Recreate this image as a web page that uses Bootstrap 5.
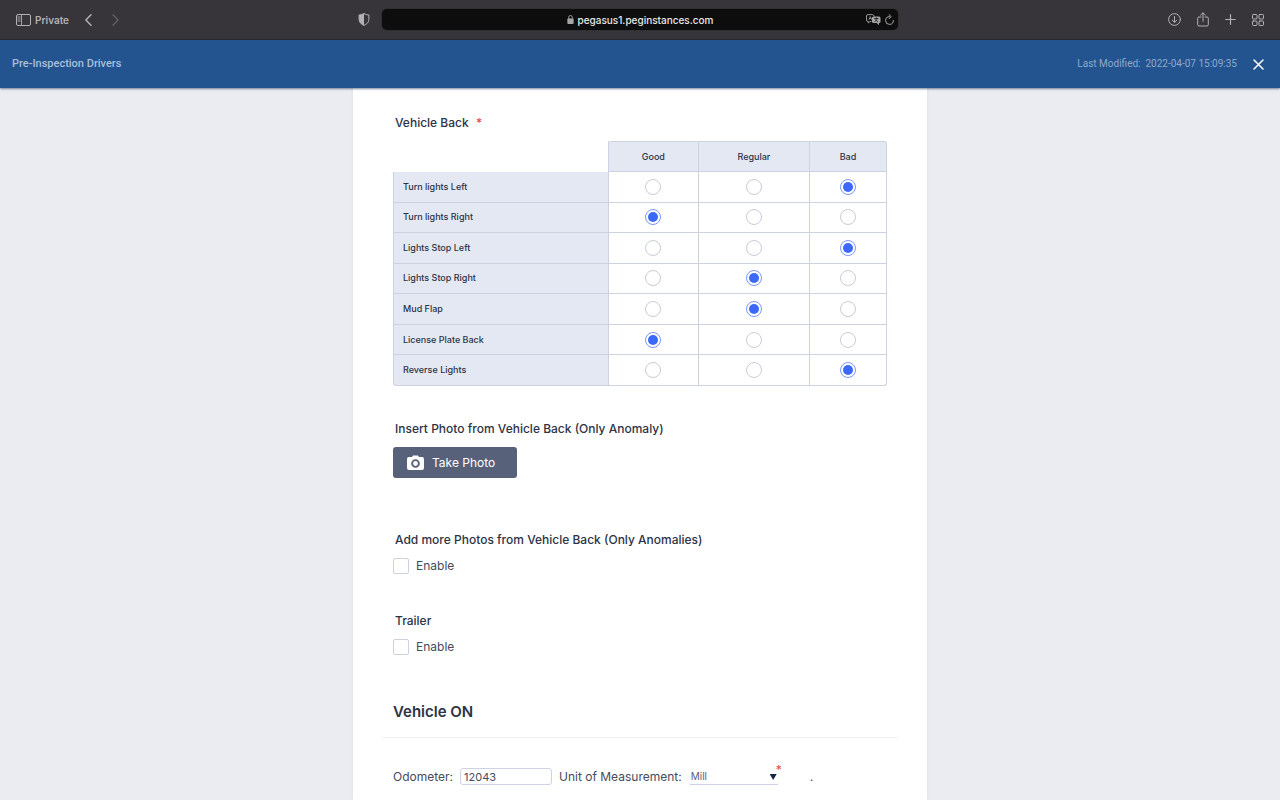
<!DOCTYPE html>
<html lang="en">
<head>
<meta charset="utf-8">
<meta name="viewport" content="width=device-width, initial-scale=1">
<title>Pre-Inspection Drivers</title>
<link href="https://cdn.jsdelivr.net/npm/bootstrap@5.3.0/dist/css/bootstrap.min.css" rel="stylesheet">
<style>
body { font-family: Inter, "Liberation Sans", sans-serif; font-size: 12px; line-height: 16px; color: #2c3345; background: #ebecf2; }
svg { display: block; fill: none; stroke: currentColor; stroke-linecap: round; stroke-linejoin: round; }

/* Browser toolbar */
.browser-bar { display: grid; grid-template-columns: 1fr 41% 1fr; height: 40px; background: #38353a; color: #b3b1b5; border-bottom: 1px solid #27282e; }
.browser-bar button, .title-bar button { padding: 0; border: 0; background: none; color: inherit; }
.browser-bar button:disabled { color: #626064; }
.private-label { font-size: 10px; font-weight: 600; }
.address-box { height: 21px; border-radius: 5px; background: #0d0d0d; color: #e8e8e8; font-size: 10px; font-weight: 500; box-shadow: 0 0 0 1px #303033; }
.address-tools { position: absolute; right: 4px; top: 5px; color: #a5a5a5; }

/* Form title bar */
.title-bar { height: 48px; padding: 0 16px 0 12px; background: #23548f; color: #a9bfdb; font-family: Roboto, sans-serif; box-shadow: 0 1px 2px #23365a99; z-index: 1; }
.form-name { font-size: 11px; font-weight: 500; }
.modified { font-size: 10px; color: #8fa9cb; }

/* Form sheet */
.sheet { width: 100%; max-width: 574px; padding: 27px 40px 14px; background: #fff; box-shadow: 0 0 3px #d9dbe5; }
.question { font-size: 12px; font-weight: 500; margin: 0 0 10px; padding-left: 2px; line-height: 16px; }
.required { color: #e5484d; }
.matrix { width: 100%; height: 245px; margin-bottom: 35px; border-collapse: separate; border-spacing: 0; table-layout: fixed; font-size: 9px; font-weight: 500; line-height: 12px; }
.matrix thead tr { height: 31px; }
.matrix col:nth-child(1) { width: 43.7%; }
.matrix col:nth-child(2) { width: 18.2%; }
.matrix col:nth-child(3) { width: 22.5%; }
.matrix th, .matrix td { padding: 0; border: 0 solid #cdd2e1; border-width: 0 1px 1px 0; vertical-align: middle; }
.matrix th { font-weight: 500; background: #e4e8f2; }
.matrix thead th { text-align: center; border-top-width: 1px; }
.matrix thead td { border-width: 0 1px 0 0; }
.matrix tbody th { padding-left: 9px; border-left-width: 1px; }
.matrix thead th:nth-child(2) { border-top-left-radius: 3px; }
.matrix thead th:last-child { border-top-right-radius: 3px; }
.matrix tbody tr:last-child th { border-bottom-left-radius: 3px; }
.matrix tbody tr:last-child td:last-child { border-bottom-right-radius: 3px; }
.matrix input { appearance: none; display: block; width: 16px; height: 16px; margin: 0 auto; border: 1px solid #c9ccd9; border-radius: 50%; background: #fff; }
.matrix input:checked { border-color: #7b97fa; background: #3c69fa content-box; padding: 2px; }
.photo-btn { width: 124px; height: 31px; margin-bottom: 54px; padding: 0 13px; gap: 8px; border-radius: 3px; background: #58617a; color: #fff; font-size: 12px; line-height: 16px; }
.photo-btn:hover { background: #48516a; color: #fff; }
.tick { gap: 7px; margin-bottom: 39px; color: #454b5e; }
.tick input { appearance: none; width: 16px; height: 16px; margin: 0; border: 1px solid #cdd0de; border-radius: 2px; background: #fff; }
.tick input:checked { background: #3c69fa; }
.section-title { margin: 47px 0 0; font-size: 15px; font-weight: 600; line-height: 20px; }
.section-rule { height: 1px; margin: 15px -11px 30px; border: 0; background: #eff0f4; opacity: 1; }
.measure-row { color: #454b5e; gap: 7px; }
.odometer { width: 92px; height: 17px; padding: 0 3px; border: 1px solid #cdd2e6; border-radius: 3px; font-size: 11px; color: #454b5e; }
.unit { appearance: none; width: 90px; height: 17px; padding: 0 2px; border: 0; border-bottom: 1px solid #cdd2e6; border-radius: 2px; font-size: 10px; color: #58617a; background: #fff; }
.unit-arrow { position: absolute; right: 2px; top: 6px; width: 7px; height: 6px; background: #192444; clip-path: polygon(0 0, 100% 0, 50% 100%); pointer-events: none; }
.unit-star { position: absolute; right: -3px; top: -6px; }
</style>
</head>
<body class="d-flex flex-column min-vh-100">
<header class="browser-bar align-items-center">
  <div class="d-flex align-items-center ps-3 pe-2">
    <button aria-label="Sidebar"><svg width="15" height="12" viewBox="0 0 15 12"><rect x=".5" y=".5" width="14" height="11" rx="1.5"/><path d="M5.5.5v11M2 3h2M2 5h2M2 7h2" stroke-width=".9"/></svg></button>
    <span class="private-label ms-1">Private</span>
    <button class="ms-3" aria-label="Back"><svg width="7" height="12" viewBox="0 0 7 12" stroke-width="1.5"><path d="M6 .8.9 6 6 11.200"/></svg></button>
    <button class="ms-3 ps-1" aria-label="Forward" disabled><svg width="7" height="12" viewBox="0 0 7 12" stroke-width="1.3"><path d="M1 .8 6.100 6 1 11.200"/></svg></button>
    <button class="ms-auto" aria-label="Privacy report"><svg width="12" height="13" viewBox="0 0 11 13"><path d="M5.500.600Q7.500 2 10.400 2v4.500c0 3-2.400 4.800-4.900 5.900C3 11.300.600 9.500.600 6.500V2Q3.500 2 5.500.600Z"/><path d="M5.500.600Q3.500 2 .600 2v4.500c0 3 2.400 4.800 4.900 5.900Z" fill="currentColor" stroke="none"/></svg></button>
  </div>
  <div class="px-1">
    <div class="address-box position-relative d-flex align-items-center justify-content-center gap-1">
      <svg width="7" height="9" viewBox="0 0 7 10"><rect x="0" y="4" width="7" height="6" rx="1" fill="#a5a5a5" stroke="none"/><path d="M1.500 4.500V2.500a2 2 0 0 1 4 0v2" stroke="#a5a5a5"/></svg>
      <span>pegasus1.peginstances.com</span>
      <div class="address-tools d-flex align-items-center gap-1">
        <button aria-label="Translate"><svg width="15" height="12" viewBox="0 0 15 12"><path d="M5 7.500H4L2.300 9V7.500H2Q.500 7.500.500 6V2Q.500.600 2 .600h4.500Q8 .600 8 2" stroke-width=".9"/><path d="m3 5.500 1.300-3 1.200 3M3.500 4.500h1.600" stroke-width=".7"/><path d="M7.500 2.500h5.500q1.500 0 1.500 1.500v3.500Q14.500 9 13 9v2.300L10.800 9H7.500Q6 9 6 7.500V4q0-1.500 1.500-1.500Z" fill="currentColor" stroke="none"/><path d="M8.500 4.500h3.600M10.300 3.800v.7M8.800 7.600q2-.8 2.600-3M9.200 5.500q.8 1.500 2.500 2.100" stroke="#0d0d0d" stroke-width=".7"/></svg></button>
        <button aria-label="Reload"><svg width="9" height="12" viewBox="0 0 9 12"><path d="M4.500 2.600A3.900 3.900 0 1 0 8.400 6.500M4 .600l2.200 2L4.200 4.700"/></svg></button>
      </div>
    </div>
  </div>
  <div class="d-flex align-items-center justify-content-end gap-3 pe-3">
    <button aria-label="Downloads"><svg width="13" height="13" viewBox="0 0 13 13"><circle cx="6.500" cy="6.500" r="5.900"/><path d="M6.500 3.500v5.700M4.300 7.200l2.200 2.200 2.200-2.200"/></svg></button>
    <button aria-label="Share"><svg width="12" height="15" viewBox="0 0 12 15"><path d="M4 5H2Q.700 5 .700 6.300v6.400Q.700 14 2 14h8q1.300 0 1.300-1.300V6.300Q11.300 5 10 5H8M6 9.300V.900M3.600 3.200 6 .800l2.400 2.400"/></svg></button>
    <button aria-label="New tab"><svg width="11" height="11" viewBox="0 0 11 11" stroke-width="1.200"><path d="M5.500.700v9.600M.700 5.500h9.600"/></svg></button>
    <button aria-label="Tab overview"><svg width="12" height="12" viewBox="0 0 12 12"><rect x=".500" y=".500" width="4.500" height="4.500" rx=".800"/><rect x="7" y=".500" width="4.500" height="4.500" rx=".800"/><rect x=".500" y="7" width="4.500" height="4.500" rx=".800"/><rect x="7" y="7" width="4.500" height="4.500" rx=".800"/></svg></button>
  </div>
</header>

<div class="title-bar d-flex align-items-center">
  <span class="form-name">Pre-Inspection Drivers</span>
  <span class="modified ms-auto">Last Modified:&nbsp; 2022-04-07 15:09:35</span>
  <button class="text-white ms-3" aria-label="Close"><svg width="11" height="11" viewBox="0 0 11 11" stroke-width="1.500"><path d="m1 1 9 9m0-9-9 9"/></svg></button>
</div>

<main class="sheet flex-grow-1 mx-auto">
  <h2 class="question" id="q-back">Vehicle Back <span class="required ps-1">*</span></h2>
  <table class="matrix" aria-labelledby="q-back">
    <colgroup><col><col><col><col></colgroup>
    <thead><tr><td></td><th scope="col">Good</th><th scope="col">Regular</th><th scope="col">Bad</th></tr></thead>
    <tbody>
      <tr><th scope="row">Turn lights Left</th><td><input type="radio" name="r1" aria-label="Turn lights Left: Good"></td><td><input type="radio" name="r1" aria-label="Turn lights Left: Regular"></td><td><input type="radio" name="r1" aria-label="Turn lights Left: Bad" checked></td></tr>
      <tr><th scope="row">Turn lights Right</th><td><input type="radio" name="r2" aria-label="Turn lights Right: Good" checked></td><td><input type="radio" name="r2" aria-label="Turn lights Right: Regular"></td><td><input type="radio" name="r2" aria-label="Turn lights Right: Bad"></td></tr>
      <tr><th scope="row">Lights Stop Left</th><td><input type="radio" name="r3" aria-label="Lights Stop Left: Good"></td><td><input type="radio" name="r3" aria-label="Lights Stop Left: Regular"></td><td><input type="radio" name="r3" aria-label="Lights Stop Left: Bad" checked></td></tr>
      <tr><th scope="row">Lights Stop Right</th><td><input type="radio" name="r4" aria-label="Lights Stop Right: Good"></td><td><input type="radio" name="r4" aria-label="Lights Stop Right: Regular" checked></td><td><input type="radio" name="r4" aria-label="Lights Stop Right: Bad"></td></tr>
      <tr><th scope="row">Mud Flap</th><td><input type="radio" name="r5" aria-label="Mud Flap: Good"></td><td><input type="radio" name="r5" aria-label="Mud Flap: Regular" checked></td><td><input type="radio" name="r5" aria-label="Mud Flap: Bad"></td></tr>
      <tr><th scope="row">License Plate Back</th><td><input type="radio" name="r6" aria-label="License Plate Back: Good" checked></td><td><input type="radio" name="r6" aria-label="License Plate Back: Regular"></td><td><input type="radio" name="r6" aria-label="License Plate Back: Bad"></td></tr>
      <tr><th scope="row">Reverse Lights</th><td><input type="radio" name="r7" aria-label="Reverse Lights: Good"></td><td><input type="radio" name="r7" aria-label="Reverse Lights: Regular"></td><td><input type="radio" name="r7" aria-label="Reverse Lights: Bad" checked></td></tr>
    </tbody>
  </table>

  <h2 class="question">Insert Photo from Vehicle Back (Only Anomaly)</h2>
  <button class="btn photo-btn d-flex align-items-center"><svg width="17" height="16" viewBox="0 0 17 16"><path d="M2 2h3L6 .500h5L12 2h3q2 0 2 2v9q0 2-2 2H2q-2 0-2-2V4q0-2 2-2Z" fill="#fff" stroke="none"/><circle cx="8.500" cy="8.500" r="3.400" stroke="#58617a" stroke-width="1.900"/></svg>Take Photo</button>

  <h2 class="question">Add more Photos from Vehicle Back (Only Anomalies)</h2>
  <div class="tick d-flex align-items-center"><input type="checkbox" id="more"><label for="more">Enable</label></div>

  <h2 class="question">Trailer</h2>
  <div class="tick d-flex align-items-center"><input type="checkbox" id="trailer"><label for="trailer">Enable</label></div>

  <h1 class="section-title">Vehicle ON</h1>
  <hr class="section-rule">
  <div class="measure-row d-flex align-items-center">
    <label for="odo">Odometer:</label>
    <input class="odometer" id="odo" type="text" value="12043">
    <label for="unit">Unit of Measurement:</label>
    <div class="position-relative d-flex">
      <select class="unit" id="unit"><option>Mill</option></select>
      <span class="unit-arrow"></span>
      <span class="unit-star required">*</span>
    </div>
    <span class="ps-4">.</span>
  </div>
</main>
<script src="https://cdn.jsdelivr.net/npm/bootstrap@5.3.0/dist/js/bootstrap.bundle.min.js"></script>
</body>
</html>
